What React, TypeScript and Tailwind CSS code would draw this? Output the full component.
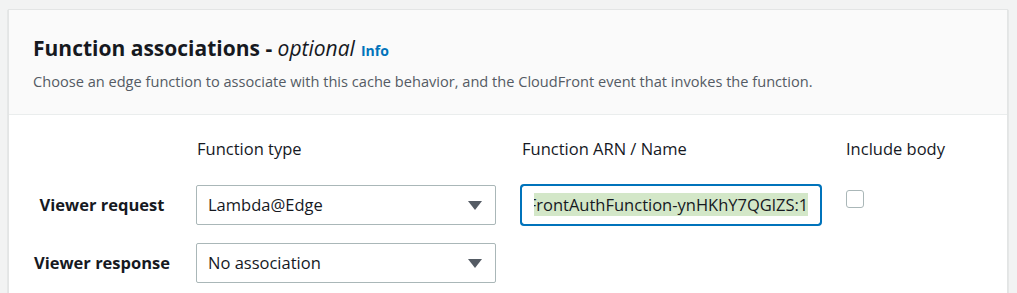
import { useEffect, useRef } from 'react';

const font = { fontFamily: '"Open Sans", "Noto Sans", sans-serif' };

const SelectBox = ({ value }: { value: string }) => (
  <div className="flex h-[40px] w-[300px] items-center justify-between rounded-[2px] border border-[#aab7b8] bg-white pl-[11px] pr-[13px] text-[16.5px] text-[#16191f]">
    <span>{value}</span>
    <svg width="14" height="9" viewBox="0 0 14 9" className="shrink-0">
      <path d="M0 0 H14 L7 9 Z" fill="#545b64" />
    </svg>
  </div>
);

const App = () => {
  const scrollRef = useRef<HTMLDivElement>(null);

  // keep the end of the ARN in view, like a focused input
  useEffect(() => {
    if (scrollRef.current) scrollRef.current.scrollLeft = scrollRef.current.scrollWidth;
  }, []);

  return (
    <div className="min-h-screen bg-[#f2f3f3] pl-[8px] pt-[9px]" style={font}>
      <div className="w-[1000px] border border-[#e3e5e5] bg-white shadow-[0_1px_1px_rgba(0,28,36,0.3)]">
        <div className="h-[105px] border-b border-[#eaeded] bg-[#fafafa] px-[24px] pt-[24px]">
          <h2 className="flex items-baseline text-[21px] leading-[29px] text-[#16191f]">
            <span className="font-bold">Function associations -&nbsp;</span>
            <span className="italic">optional</span>
            <a className="ml-[6px] text-[14px] font-bold text-[#0073bb]">Info</a>
          </h2>
          <p className="mt-[6px] text-[14.6px] leading-[20px] text-[#545b64]">
            Choose an edge function to associate with this cache behavior, and the CloudFront event that invokes the function.
          </p>
        </div>

        <div className="grid grid-cols-[138px_300px_300px_auto] items-center gap-x-[25px] pl-[24px] pt-[23px] text-[16.5px] text-[#16191f]">
          <div />
          <div className="pl-[1px] leading-[22px]">Function type</div>
          <div className="pl-[1px] leading-[22px]">Function ARN / Name</div>
          <div className="leading-[22px]">Include body</div>

          <div className="mt-[25px] whitespace-nowrap text-center font-bold">Viewer request</div>
          <div className="mt-[25px]"><SelectBox value="Lambda@Edge" /></div>
          <div className="mt-[25px]">
            <div className="flex h-[40px] w-[300px] items-center rounded-[3px] border border-[#0073bb] bg-white px-[12px] outline-2 -outline-offset-1 outline-[#0073bb]">
              <div ref={scrollRef} className="overflow-hidden whitespace-nowrap">
                <span className="bg-[#d3e7c8] leading-[23px]">
                  arn:aws:lambda:us-east-1:123456789012:function:CloudFrontAuthFunction-ynHKhY7QGlZS:1
                </span>
              </div>
            </div>
          </div>
          <div className="mt-[25px] self-start pt-[5px]">
            <div className="h-[18px] w-[18px] rounded-[3px] border border-[#aab7b8] bg-white" />
          </div>

          <div className="mt-[18px] whitespace-nowrap text-center font-bold">Viewer response</div>
          <div className="mt-[18px]"><SelectBox value="No association" /></div>
          <div />
          <div />
        </div>
        <div className="h-[20px]" />
      </div>
    </div>
  );
};

export default App;
